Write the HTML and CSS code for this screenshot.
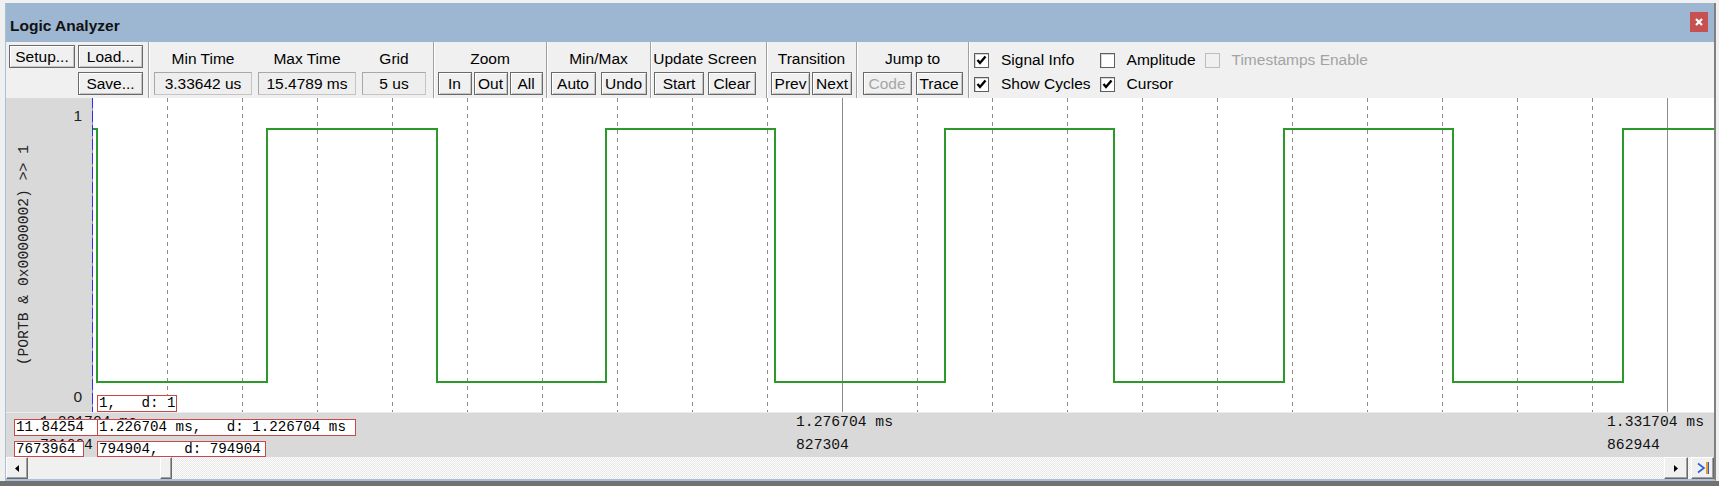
FILE: index.html
```html
<!DOCTYPE html>
<html lang="en">
<head>
    <meta charset="UTF-8">
    <title>Logic Analyzer</title>
    <link rel="stylesheet" href="styles.css">
</head>
<body>
    <div class="window">
        <div class="titlebar">
            <span class="title">Logic Analyzer</span>
            <span class="close">
                <svg width="8" height="8" viewBox="0 0 8 8"><path d="M1 1L7 7M7 1L1 7" stroke="#fff" stroke-width="2.2"/></svg>
            </span>
        </div>

        <div class="toolbar">
            <div class="group files">
                <button class="btn">Setup...</button>
                <button class="btn">Load...</button>
                <button class="btn save">Save...</button>
            </div>

            <div class="group times">
                <div class="field">
                    <span class="label">Min Time</span>
                    <span class="value w98">3.33642 us</span>
                </div>
                <div class="field">
                    <span class="label">Max Time</span>
                    <span class="value w98">15.4789 ms</span>
                </div>
                <div class="field">
                    <span class="label">Grid</span>
                    <span class="value w64">5 us</span>
                </div>
            </div>

            <div class="group zoom">
                <span class="label">Zoom</span>
                <div class="btns tight">
                    <button class="btn" style="width:34px">In</button>
                    <button class="btn" style="width:34px">Out</button>
                    <button class="btn" style="width:33px">All</button>
                </div>
            </div>

            <div class="group minmax">
                <span class="label">Min/Max</span>
                <div class="btns wide">
                    <button class="btn" style="width:45px">Auto</button>
                    <button class="btn" style="width:46px">Undo</button>
                </div>
            </div>

            <div class="group update">
                <span class="label">Update Screen</span>
                <div class="btns">
                    <button class="btn" style="width:50px">Start</button>
                    <button class="btn" style="width:48px">Clear</button>
                </div>
            </div>

            <div class="group transition">
                <span class="label">Transition</span>
                <div class="btns tight">
                    <button class="btn" style="width:39px">Prev</button>
                    <button class="btn" style="width:40px">Next</button>
                </div>
            </div>

            <div class="group jump">
                <span class="label">Jump to</span>
                <div class="btns">
                    <button class="btn disabled" style="width:49px">Code</button>
                    <button class="btn" style="width:47px">Trace</button>
                </div>
            </div>

            <div class="group options">
                <span class="check"><span class="box on"><svg width="11" height="11" viewBox="0 0 11 11"><path d="M1.5 5L4 8L9.5 1.5" fill="none" stroke="#000" stroke-width="2.4"/></svg></span>Signal Info</span>
                <span class="check"><span class="box"></span>Amplitude</span>
                <span class="check off"><span class="box"></span>Timestamps Enable</span>
                <span class="check"><span class="box on"><svg width="11" height="11" viewBox="0 0 11 11"><path d="M1.5 5L4 8L9.5 1.5" fill="none" stroke="#000" stroke-width="2.4"/></svg></span>Show Cycles</span>
                <span class="check"><span class="box on"><svg width="11" height="11" viewBox="0 0 11 11"><path d="M1.5 5L4 8L9.5 1.5" fill="none" stroke="#000" stroke-width="2.4"/></svg></span>Cursor</span>
            </div>
        </div>

        <div class="plot">
            <div class="signal">
                <div class="sig-name"><span>(PORTB &amp; 0x00000002) &gt;&gt; 1</span></div>
                <div class="scale">
                    <span>1</span>
                    <span>0</span>
                </div>
            </div>
            <div class="wave">
                <svg width="1621" height="314" viewBox="0 0 1621 314">
                    <!-- 5 us grid -->
                    <path d="M74.5 0V314M149.5 0V314M224.5 0V314M299.5 0V314M374.5 0V314M449.5 0V314M524.5 0V314M599.5 0V314M674.5 0V314M824.5 0V314M899.5 0V314M974.5 0V314M1049.5 0V314M1124.5 0V314M1199.5 0V314M1274.5 0V314M1349.5 0V314M1424.5 0V314M1499.5 0V314"
                          stroke="#8c8c8c" stroke-width="1" stroke-dasharray="4 4" fill="none"/>
                    <!-- time marks -->
                    <path d="M749.5 0V314M1574.5 0V314" stroke="#8c8c8c" stroke-width="1" fill="none"/>
                    <!-- signal -->
                    <path d="M0 31H4V284H174V31H344V284H513V31H682V284H852V31H1021V284H1191V31H1360V284H1530V31H1621"
                          stroke="#2b9a2b" stroke-width="2" fill="none"/>
                </svg>
                <div class="info tip">1,   d: 1</div>
            </div>
        </div>

        <div class="timeline">
            <span class="mark" style="left:34px;top:1px">1.221704 ms</span>
            <span class="mark" style="left:34px;top:24px">791664</span>
            <span class="mark" style="left:790px;top:1px">1.276704 ms</span>
            <span class="mark" style="left:790px;top:24px">827304</span>
            <span class="mark" style="left:1601px;top:1px">1.331704 ms</span>
            <span class="mark" style="left:1601px;top:24px">862944</span>

            <div class="info" style="left:8px;top:6px;width:84px">11.84254</div>
            <div class="info" style="left:91px;top:6px;width:259px">1.226704 ms,   d: 1.226704 ms</div>
            <div class="info low" style="left:8px;top:28px;width:70px">7673964</div>
            <div class="info low" style="left:91px;top:28px;width:169px">794904,   d: 794904</div>
        </div>

        <div class="hscroll">
            <span class="sb-btn" style="width:22px">
                <svg width="4" height="7" viewBox="0 0 4 7"><path d="M4 0L0 3.5L4 7Z" fill="#000"/></svg>
            </span>
            <span class="sb-lit"></span>
            <span class="sb-btn sb-thumb"></span>
            <span class="sb-track"></span>
            <span class="sb-btn" style="width:24px">
                <svg width="4" height="7" viewBox="0 0 4 7"><path d="M0 0L4 3.5L0 7Z" fill="#000"/></svg>
            </span>
            <span class="sb-gap"></span>
            <span class="sb-btn" style="width:23px">
                <svg width="14" height="14" viewBox="0 0 14 14">
                    <path d="M2 2.5L8 7L2 11.5" fill="none" stroke="#2f5bd0" stroke-width="1.6"/>
                    <rect x="10" y="1" width="2" height="12" fill="#e59a32"/>
                    <rect x="12" y="1" width="1" height="12" fill="#2f5bd0"/>
                </svg>
            </span>
        </div>
    </div>
</body>
</html>
```

FILE: styles.css
```css
* {
    box-sizing: border-box;
}
html, body {
    margin: 0;
}
body {
    width: 1719px;
    height: 486px;
    padding: 3px 3px 0 5px;
    background: #f0f0f0;
    border-bottom: 5px solid #727272;
    font-family: "Liberation Sans", Arial, sans-serif;
    font-size: 15.5px;
    color: #000;
    overflow: hidden;
}
.window {
    height: 478px;
    display: flex;
    flex-direction: column;
    border-left: 1px solid #a9bfd6;
    border-right: 2px solid #808080;
    border-bottom: 2px solid #a9c1da;
}

/* title bar */
.titlebar {
    height: 39px;
    flex: none;
    display: flex;
    justify-content: space-between;
    background: #9db6d2;
    padding: 0 6px 0 4px;
}
.title {
    font-weight: bold;
    line-height: 39px;
    padding-top: 3px;
    color: #111;
}
.close {
    width: 18px;
    height: 20px;
    margin-top: 9px;
    background: #c75050;
    display: flex;
    align-items: center;
    justify-content: center;
}

/* toolbar */
.toolbar {
    height: 56px;
    flex: none;
    display: flex;
    background: #f0f0f0;
}
.group {
    display: flex;
    flex-direction: column;
    align-items: center;
    padding-top: 6px;
    border-left: 1px solid #a0a0a0;
    box-shadow: inset 1px 0 #fff;
}
.label {
    line-height: 22px;
    height: 22px;
    margin-bottom: 2px;
    white-space: nowrap;
}
.btn {
    height: 23px;
    padding: 0;
    font: inherit;
    color: #000;
    line-height: 21px;
    background: #f0f0f0;
    border: 1px solid #6a6a6a;
    box-shadow: inset 1px 1px #fff, inset -1px -1px #c4c4c4;
    text-align: center;
}
.btn.disabled {
    color: #a6a6a6;
}
.btns {
    display: flex;
    gap: 4px;
}
.btns.tight {
    gap: 2px;
}
.btns.wide {
    gap: 5px;
}
.files {
    width: 142px;
    border-left: none;
    box-shadow: none;
    display: grid;
    grid-template-columns: 66px 65px;
    grid-template-rows: 23px 23px;
    gap: 4px 3px;
    padding: 3px 0 0 3px;
    align-content: start;
}
.files .save {
    grid-column: 2;
}
.times {
    width: 285px;
    flex-direction: row;
    align-items: flex-start;
    gap: 6px;
    padding-left: 5px;
}
.field {
    display: flex;
    flex-direction: column;
    align-items: center;
}
.value {
    height: 23px;
    line-height: 21px;
    text-align: center;
    background: #eeeeee;
    border: 1px solid #c4c4c4;
    border-top-color: #a8a8a8;
    border-left-color: #a8a8a8;
}
.w98 {
    width: 98px;
}
.w64 {
    width: 64px;
}
.zoom {
    width: 113px;
}
.minmax {
    width: 104px;
}
.update {
    width: 116px;
    padding-right: 7px;
}
.transition {
    width: 90px;
}
.jump {
    width: 112px;
}
.options {
    flex: 1;
    display: grid;
    grid-template-columns: auto auto auto;
    grid-template-rows: 24px 24px;
    column-gap: 9px;
    justify-content: start;
    align-items: center;
    padding-left: 5px;
}
.check {
    display: flex;
    align-items: center;
    gap: 12px;
    white-space: nowrap;
}
.check.off {
    color: #a3a3a3;
}
.box {
    width: 15px;
    height: 15px;
    background: #fff;
    border: 1px solid #5e5e5e;
    box-shadow: inset 1px 1px #d6d6d6;
    display: flex;
    align-items: center;
    justify-content: center;
}
.check.off .box {
    background: #f0f0f0;
    border-color: #bcbcbc;
    box-shadow: none;
}

/* plot area */
.plot {
    height: 314px;
    flex: none;
    display: flex;
}
.signal {
    width: 87px;
    display: flex;
    background: #d9d9d9;
    border-right: 1px solid transparent;
    border-image: repeating-linear-gradient(#2d2dff 0 11px, #9a9a9a 11px 14px) 1;
}
.sig-name {
    width: 36px;
    display: flex;
    align-items: center;
    justify-content: center;
}
.sig-name span {
    writing-mode: vertical-rl;
    transform: rotate(180deg);
    font-family: "Liberation Mono", "Courier New", monospace;
    font-size: 14.7px;
    white-space: pre;
    color: #222;
}
.scale {
    flex: 1;
    display: flex;
    flex-direction: column;
    justify-content: space-between;
    align-items: flex-end;
    padding: 9px 10px 7px 0;
    line-height: 17px;
    color: #222;
}
.wave {
    flex: 1;
    position: relative;
    overflow: hidden;
    background: #fff;
}
.wave svg {
    display: block;
    shape-rendering: crispEdges;
}

/* cursor readouts */
.info {
    position: absolute;
    height: 17px;
    padding-left: 1px;
    background: #fff;
    border: 1px solid #c8484a;
    font-family: "Liberation Mono", "Courier New", monospace;
    font-size: 14.2px;
    line-height: 15px;
    white-space: pre;
    overflow: hidden;
    color: #000;
}
.info.low {
    height: 16px;
    line-height: 14px;
}
.tip {
    left: 4px;
    bottom: 0;
    width: 80px;
}

/* time axis */
.timeline {
    height: 45px;
    flex: none;
    position: relative;
    background: #d9d9d9;
    border-top: 1px solid #ececec;
    font-family: "Liberation Mono", "Courier New", monospace;
    font-size: 14.7px;
}
.mark {
    position: absolute;
    line-height: 17px;
    white-space: pre;
    color: #111;
}

/* scroll bar */
.hscroll {
    height: 22px;
    flex: none;
    display: flex;
    background: repeating-conic-gradient(#fdfdfd 0 25%, #e9e9e9 0 50%) 0 0 / 2px 2px;
}
.sb-btn {
    flex: none;
    display: flex;
    align-items: center;
    justify-content: center;
    background: #f0f0f0;
    border: 1px solid;
    border-color: #fff #696969 #696969 #fff;
    box-shadow: inset -1px -1px #a0a0a0;
}
.sb-lit {
    width: 132px;
    background: #f0f0f0;
}
.sb-thumb {
    width: 12px;
}
.sb-track {
    flex: 1;
}
.sb-gap {
    width: 3px;
}
```
